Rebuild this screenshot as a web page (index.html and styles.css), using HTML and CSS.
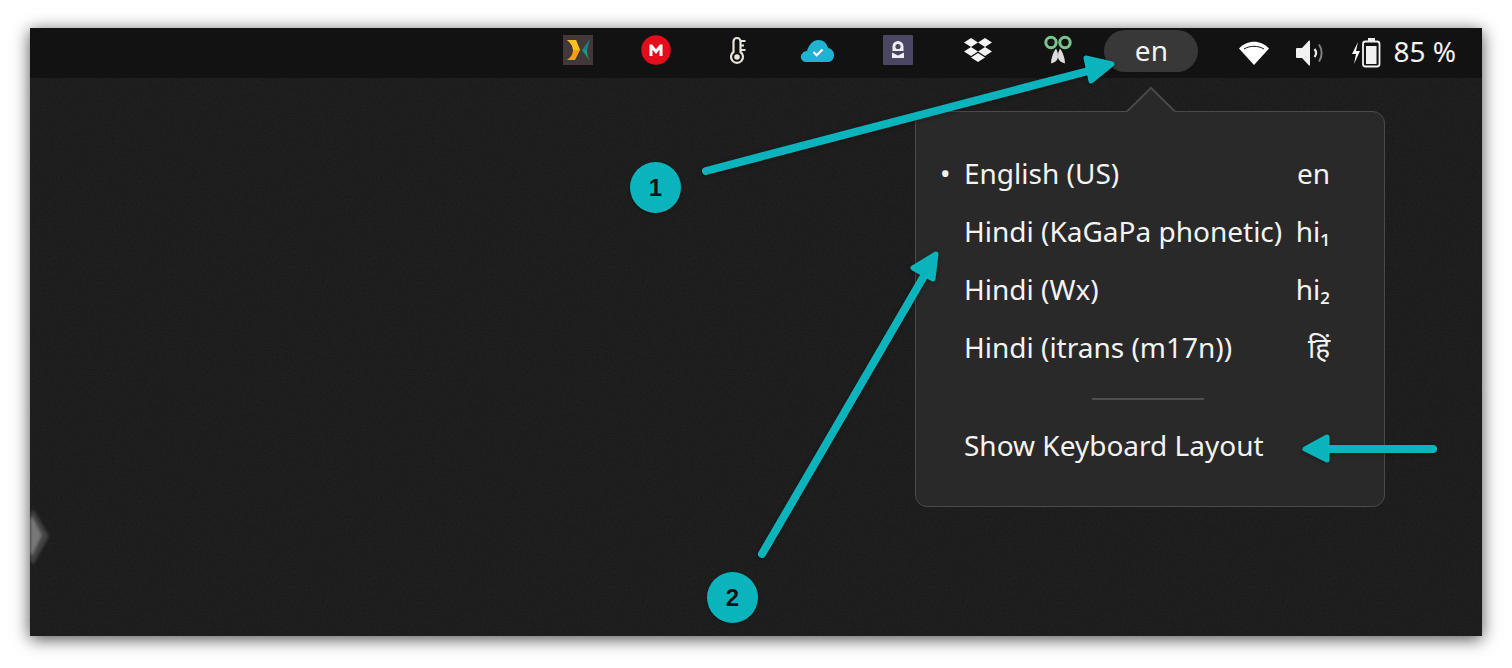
FILE: index.html
```html
<!DOCTYPE html>
<html lang="en">
<head>
<meta charset="utf-8">
<title>Keyboard layout menu</title>
<link rel="stylesheet" href="styles.css">
</head>
<body>
<main class="shot">
  <header class="topbar">
    <div class="tray">
      <svg class="ico" viewBox="0 0 30 30"><rect width="30" height="30" fill="#42383a"/><path d="M4 5h9l4 10-5 10H4c4-3 6-6 6-10S8 8 4 5z" fill="#f59c12"/><path d="M4 5h9l4 10h-7C10 11 8 8 4 5z" fill="#fbbf1e"/><path d="M27 4l-8 11h5z" fill="#1c7f86"/><path d="M27 26l-8-11h5c0 4 1 8 3 11z" fill="#0fa27c"/></svg>
      <svg class="ico" viewBox="0 0 30 30"><circle cx="13" cy="15" r="14.700" fill="#e30d1c"/><path d="M6.500 21V9.500h2.600L13 14.200l3.900-4.700h2.600V21h-3v-6.200L13 19l-3.500-4.200V21z" fill="#fff"/></svg>
      <svg class="ico" viewBox="0 0 30 30"><path d="M10.500 6.500a3.500 3.500 0 0 1 7 0v10.500a6 6 0 1 1-7 0z" fill="none" stroke="#e9e5dc" stroke-width="2.200"/><circle cx="14" cy="22" r="2.800" fill="#e9e5dc"/><path d="M18 6h4.500M18 10.500h3M18 15h4.500" stroke="#e9e5dc" stroke-width="2"/></svg>
      <svg class="ico" viewBox="0 0 30 30"><path d="M3 27a5 5 0 0 1-3.500-8.700c1-1.500 2.500-2.300 4.500-2.300C6 9.500 10 5 15.500 5 20.500 5 24 8.500 25 13c3.500.5 6 3 6 7 0 4-2.500 7-6 7z" fill="#1fb3d1"/><path d="M10.500 17l3.200 3.200 5.800-5.700" fill="none" stroke="#fff" stroke-width="2.200"/></svg>
      <svg class="ico" viewBox="0 0 30 30"><rect width="30" height="30" rx="1" fill="#4b4661"/><path d="M9.500 11.500a5.500 5.500 0 0 1 11 0v4.500h-11z" fill="#eee"/><circle cx="15" cy="11.500" r="2.600" fill="#4b4661"/><path d="M9 17.500l6 3 6-3v5.500h-12z" fill="#eee"/></svg>
      <svg class="ico" viewBox="0 0 30 30"><path d="M8 3l7 4.500-7 4.500-7-4.500zM22 3l7 4.500-7 4.500-7-4.500zM8 12l7 4.500-7 4.500-7-4.500zM22 12l7 4.500-7 4.500-7-4.500zM15 18l7 4.500-7 4.500-7-4.500z" fill="#f4f4f4"/></svg>
      <svg class="ico" viewBox="0 0 30 30"><circle cx="8" cy="7.500" r="5.200" fill="none" stroke="#79c58c" stroke-width="3"/><circle cx="22" cy="7.500" r="5.200" fill="none" stroke="#79c58c" stroke-width="3"/><path d="M13 13.500c-3 4-5 10-5 15 4-1 6.500-3 7-6 .5-3-.500-6-2-9zM17 13.500c3 4 5 10 5 15-4-1-6.500-3-7-6-.5-3 .5-6 2-9z" fill="#ddd"/></svg>
    </div>
    <div class="pill">en</div>
    <div class="status">
      <svg class="wifi" viewBox="0 0 30 24"><path d="M0 7.500C8 -1.500 22 -1.500 30 7.500L15 24z" fill="#fff"/><path d="M5 8c6-3.600 14-3.600 20 0" fill="none" stroke="#121212" stroke-width="1"/></svg>
      <svg class="speaker" viewBox="0 0 28 26"><path d="M0 9q0-1 1-1h5l7-7.500q1-.5 1 1v23q0 1.500-1 1L6 18H1q-1 0-1-1z" fill="#f2f2f2"/><path d="M18.500 9c2 2.500 2 5.500 0 8" fill="none" stroke="#e8e8e8" stroke-width="2.200"/><path d="M23 4.500c3.500 5 3.500 12 0 17" fill="none" stroke="#808080" stroke-width="2"/></svg>
      <svg class="battery" viewBox="0 0 32 30"><path d="M7 4L1 16h4l-2 10 6-13H5z" fill="#fff"/><rect x="12" y="3.500" width="16.500" height="25" rx="2.500" fill="none" stroke="#f2f2f2" stroke-width="1.800"/><rect x="17" y="0" width="7" height="3" fill="#f2f2f2"/><rect x="15" y="8" width="10.500" height="18" fill="#f2f2f2"/></svg>
      <span class="percent">85 %</span>
    </div>
  </header>
  <section class="desktop">
    <svg class="noise" width="100%" height="100%"><filter id="grain" x="0" y="0" width="100%" height="100%"><feTurbulence type="fractalNoise" baseFrequency="0.8" numOctaves="2" seed="4"/><feColorMatrix values="0 0 0 0 0.01  0 0 0 0 0.01  0 0 0 0 0.01  0 0 0 2.600 -0.950"/></filter><rect width="100%" height="100%" filter="url(#grain)"/></svg>
    <svg class="diamond" viewBox="0 0 20 58"><path d="M-10 29L3 1 19 28 3 57z" fill="#4c4c4c"/><path d="M-10 29L2 8 12 27 2 48z" fill="#8f8f8f"/></svg>
    <div class="popup">
      <svg class="beak" viewBox="0 0 50 25"><path d="M1 24.500L25 .8 49 24.500z" fill="#292929"/><path d="M1 24.500L25 .8 49 24.500" fill="none" stroke="#4a4a4a" stroke-width="1.800"/><rect x="2" y="24" width="46" height="2" fill="#292929"/></svg>
      <ul class="menu">
        <li class="row"><span class="dot">•</span><span class="label">English (US)</span><span class="short">en</span></li>
        <li class="row"><span class="dot"></span><span class="label">Hindi (KaGaPa phonetic)</span><span class="short">hi₁</span></li>
        <li class="row"><span class="dot"></span><span class="label">Hindi (Wx)</span><span class="short">hi₂</span></li>
        <li class="row"><span class="dot"></span><span class="label">Hindi (itrans (m17n))</span><span class="short">हिं</span></li>
      </ul>
      <hr class="sep">
      <div class="row"><span class="dot"></span><span class="label">Show Keyboard Layout</span></div>
    </div>
  </section>
</main>
<svg class="arrows" width="1512" height="668" viewBox="0 0 1512 668">
  <g fill="#0ab4bc" stroke="#0ab4bc" stroke-linejoin="round" stroke-linecap="round">
    <path d="M706 171L1096 69" fill="none" stroke-width="8"/>
    <path d="M1112 64L1086 58 1091 81z" stroke-width="5"/>
    <path d="M762 554L924 276" fill="none" stroke-width="8"/>
    <path d="M936 254L913 268 933 279z" stroke-width="5"/>
    <path d="M1433 449L1320 449" fill="none" stroke-width="8"/>
    <path d="M1305 449L1327 437 1327 460z" stroke-width="5"/>
  </g>
</svg>
<div class="badge badge-one">1</div>
<div class="badge badge-two">2</div>
</body>
</html>
```

FILE: styles.css
```css
* { box-sizing: border-box; }
html, body { margin: 0; height: 100%; }
body {
  position: relative;
  width: 1512px;
  height: 668px;
  overflow: hidden;
  padding: 28px 30px 32px;
  background: #fff;
  font-family: "Noto Sans", "Open Sans", "Noto Sans CJK SC", sans-serif;
  color: #f4f4f4;
}
.shot {
  height: 608px;
  display: flex;
  flex-direction: column;
  box-shadow: 0 3px 16px rgba(0, 0, 0, .7);
}
.topbar {
  height: 50px;
  flex: none;
  display: flex;
  align-items: center;
  justify-content: flex-end;
  padding-right: 26px;
  background: #121212;
}
.tray { display: flex; align-items: center; gap: 50px; height: 30px; align-self: flex-start; margin-top: 7px; }
.ico { width: 30px; height: 30px; overflow: visible; display: block; }
.pill {
  width: 94px;
  height: 42px;
  margin-left: 31px;
  align-self: flex-start;
  margin-top: 2px;
  border-radius: 21px;
  background: #383838;
  display: flex;
  align-items: center;
  justify-content: center;
  font-size: 28px;
  line-height: 1;
  padding-bottom: 2px;
}
.status { display: flex; align-items: center; margin-left: 41px; }
.wifi { width: 30px; height: 24px; }
.speaker { width: 28px; height: 26px; margin-left: 27px; }
.battery { width: 32px; height: 30px; margin-left: 27px; }
.percent { margin-left: 10px; font-size: 28px; line-height: 1; white-space: nowrap; padding-bottom: 4px; }
.desktop {
  flex: 1;
  position: relative;
  background: #202020;
  overflow: hidden;
}
.noise { position: absolute; inset: 0; }
.diamond { position: absolute; left: 0; top: 430px; width: 20px; height: 58px; filter: blur(1.500px); opacity: .8; }
.popup {
  position: absolute;
  top: 33px;
  right: 97px;
  width: 470px;
  height: 396px;
  padding: 32px 54px 0 0;
  background: #292929;
  border: 1.500px solid #4a4a4a;
  border-radius: 12px;
}
.beak { position: absolute; left: 210px; top: -25px; width: 50px; height: 25px; overflow: visible; }
.menu { list-style: none; margin: 0; padding: 0; }
.row {
  height: 58px;
  display: flex;
  align-items: center;
  font-size: 28px;
  line-height: 1;
  white-space: nowrap;
}
.dot { width: 48px; padding-left: 24px; flex: none; font-size: 28px; }
.label { flex: 1; }
.short { text-align: right; }
.sep { width: 112px; height: 1.500px; margin: 22px 0 16px 176px; border: 0; background: #4e4e4e; }
.arrows { position: absolute; left: 0; top: 0; filter: drop-shadow(0 1px 2px rgba(0, 0, 0, .35)); }
.badge {
  position: absolute;
  width: 51px;
  height: 51px;
  border-radius: 50%;
  background: #0ab4bc;
  color: #111;
  display: flex;
  align-items: center;
  justify-content: center;
  font: 700 24px "Liberation Sans", sans-serif;
  box-shadow: 0 1px 3px rgba(0, 0, 0, .4);
}
.badge-one { left: 630px; top: 162px; }
.badge-two { left: 707px; top: 572px; }
```
